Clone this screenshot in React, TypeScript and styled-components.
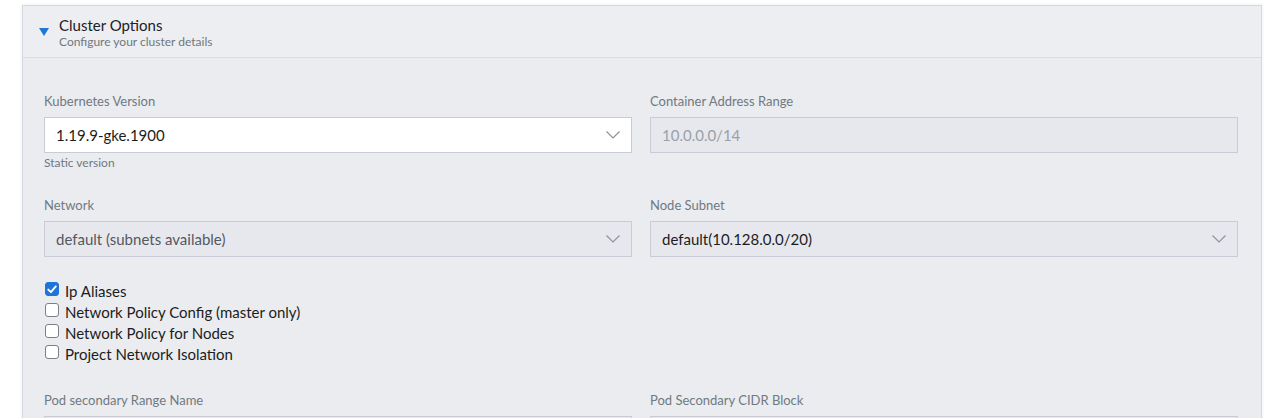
import React from "react";
import styled, { createGlobalStyle } from "styled-components";

const Global = createGlobalStyle`
  html, body { margin: 0; padding: 0; background: #ffffff; }
  body { font-family: Lato, "Open Sans", Arial, sans-serif; -webkit-font-smoothing: antialiased; }
  * { box-sizing: border-box; }
`;

const Page = styled.div`
  padding: 5px 26px 0 22px;
  height: 418px;
  overflow: hidden;
`;

const Panel = styled.section`
  width: 1240px;
  background: #ebecf0;
  border: 1px solid #d6d9e0;
  box-shadow: 0 0 3px rgba(60, 70, 90, 0.12);
`;

const Header = styled.div`
  display: flex;
  align-items: flex-start;
  gap: 10px;
  padding: 10px 16px 8px 16px;
  border-bottom: 1px solid #d9dbe1;
  background: #eceef1;
`;

const Caret = styled.span`
  width: 0;
  height: 0;
  margin-top: 12px;
  border-left: 5px solid transparent;
  border-right: 5px solid transparent;
  border-top: 8px solid #1f78d1;
`;

const Titles = styled.div`
  display: flex;
  flex-direction: column;
`;

const Title = styled.div`
  font-size: 15px;
  line-height: 18px;
  color: #1d2025;
`;

const Subtitle = styled.div`
  font-size: 12px;
  line-height: 15px;
  color: #6f787e;
`;

const Body = styled.div`
  padding: 35px 22px 0 21px;
  display: flex;
  flex-direction: column;
`;

const Row = styled.div<{ $gap: number }>`
  display: grid;
  grid-template-columns: 588px 588px;
  column-gap: 18px;
  align-items: start;
  margin-bottom: ${(p) => p.$gap}px;
`;

const Field = styled.div`
  display: flex;
  flex-direction: column;
`;

const Label = styled.div`
  font-size: 13px;
  line-height: 16px;
  color: #6f7a80;
  margin-bottom: 8px;
`;

const Box = styled.div<{ $variant: "active" | "disabled" | "muted" | "filled" }>`
  height: 36px;
  display: flex;
  align-items: center;
  justify-content: space-between;
  padding: 0 10px 0 11px;
  border: 1px solid #c9cbd7;
  background: ${(p) => (p.$variant === "active" ? "#ffffff" : "#e7e8ee")};
  font-size: 15px;
  color: ${(p) =>
    p.$variant === "active" || p.$variant === "filled"
      ? "#1b1d21"
      : p.$variant === "disabled"
      ? "#9aa0a6"
      : "#54585f"};
`;

const Help = styled.div`
  font-size: 12px;
  line-height: 14px;
  color: #6f787e;
  margin-top: 3px;
`;

const Checks = styled.div`
  display: flex;
  flex-direction: column;
  margin-top: -3px;
  margin-bottom: 28px;
  padding-left: 1px;
`;

const CheckRow = styled.label`
  display: flex;
  align-items: center;
  gap: 6px;
  height: 21px;
  font-size: 15px;
  color: #1b1d21;
`;

const CheckBox = styled.span<{ $on: boolean }>`
  width: 14px;
  height: 14px;
  border-radius: 3px;
  display: inline-flex;
  align-items: center;
  justify-content: center;
  margin-top: -3px;
  background: ${(p) => (p.$on ? "#1f74dc" : "#ffffff")};
  border: 1px solid ${(p) => (p.$on ? "#1f74dc" : "#7c7f86")};
`;

const Chevron = () => (
  <svg width="16" height="10" viewBox="0 0 16 10">
    <path d="M1.5 1.5 L8 8 L14.5 1.5" fill="none" stroke="#8d939a" strokeWidth="1.2" />
  </svg>
);

const Tick = () => (
  <svg width="10" height="9" viewBox="0 0 10 9">
    <path d="M1.3 4.6 L3.9 7.2 L8.8 1.4" fill="none" stroke="#ffffff" strokeWidth="1.9" strokeLinecap="round" strokeLinejoin="round" />
  </svg>
);

const checks = [
  { label: "Ip Aliases", on: true },
  { label: "Network Policy Config (master only)", on: false },
  { label: "Network Policy for Nodes", on: false },
  { label: "Project Network Isolation", on: false },
];

export default function App() {
  return (
    <Page>
      <Global />
      <Panel>
        <Header>
          <Caret />
          <Titles>
            <Title>Cluster Options</Title>
            <Subtitle>Configure your cluster details</Subtitle>
          </Titles>
        </Header>
        <Body>
          <Row $gap={27}>
            <Field>
              <Label>Kubernetes Version</Label>
              <Box $variant="active">
                <span>1.19.9-gke.1900</span>
                <Chevron />
              </Box>
              <Help>Static version</Help>
            </Field>
            <Field>
              <Label>Container Address Range</Label>
              <Box $variant="disabled">
                <span>10.0.0.0/14</span>
              </Box>
            </Field>
          </Row>
          <Row $gap={26}>
            <Field>
              <Label>Network</Label>
              <Box $variant="muted">
                <span>default (subnets available)</span>
                <Chevron />
              </Box>
            </Field>
            <Field>
              <Label>Node Subnet</Label>
              <Box $variant="filled">
                <span>default(10.128.0.0/20)</span>
                <Chevron />
              </Box>
            </Field>
          </Row>
          <Checks>
            {checks.map((c) => (
              <CheckRow key={c.label}>
                <CheckBox $on={c.on}>{c.on && <Tick />}</CheckBox>
                {c.label}
              </CheckRow>
            ))}
          </Checks>
          <Row $gap={0}>
            <Field>
              <Label>Pod secondary Range Name</Label>
              <Box $variant="muted" />
            </Field>
            <Field>
              <Label>Pod Secondary CIDR Block</Label>
              <Box $variant="muted" />
            </Field>
          </Row>
        </Body>
      </Panel>
    </Page>
  );
}
